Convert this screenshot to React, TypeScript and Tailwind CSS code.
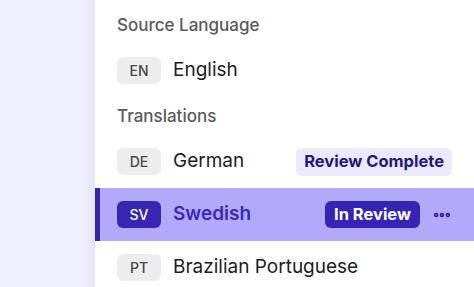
import { MoreHorizontal } from 'lucide-react';

type Lang = {
  code: string;
  name: string;
  status?: 'complete' | 'review';
  active?: boolean;
};

const translations: Lang[] = [
  { code: 'DE', name: 'German', status: 'complete' },
  { code: 'SV', name: 'Swedish', status: 'review', active: true },
  { code: 'PT', name: 'Brazilian Portuguese' },
];

function CodeBadge({ code, active }: { code: string; active?: boolean }) {
  return (
    <span
      className={
        active
          ? 'flex h-[27px] w-[44px] items-center justify-center rounded-[6px] bg-[#3726b4] text-[14px] font-medium text-white'
          : 'flex h-[27px] w-[44px] items-center justify-center rounded-[6px] bg-[#ededed] text-[14px] font-medium text-[#474747]'
      }
    >
      {code}
    </span>
  );
}

function Row({ lang }: { lang: Lang }) {
  return (
    <div
      className={
        lang.active
          ? 'flex h-[53px] items-center border-l-[5px] border-[#3624b0] bg-[#b2aaf8] pl-[17px] pr-[22px]'
          : 'flex h-[53px] items-center pl-[22px] pr-[22px]'
      }
    >
      <CodeBadge code={lang.code} active={lang.active} />
      <span
        className={
          lang.active
            ? 'ml-[12px] text-[19px] font-semibold text-[#3a28b8]'
            : 'ml-[12px] text-[19px] text-[#1c1c1c]'
        }
      >
        {lang.name}
      </span>
      <div className="ml-auto flex items-center">
        {lang.status === 'complete' && (
          <span className="flex h-[28px] items-center rounded-[6px] bg-[#ebe9fc] px-[8px] text-[16.5px] font-bold text-[#1f1a7c]">
            Review Complete
          </span>
        )}
        {lang.status === 'review' && (
          <>
            <span className="flex h-[27px] items-center rounded-[6px] bg-[#3624b4] px-[9px] text-[16.5px] font-bold text-white">
              In Review
            </span>
            <MoreHorizontal className="ml-[12px] h-[20px] w-[20px] text-[#2d1fa3]" strokeWidth={3.5} />
          </>
        )}
      </div>
    </div>
  );
}

export default function App() {
  return (
    <div
      className="flex h-[287px] w-[474px] overflow-hidden bg-white"
      style={{ fontFamily: 'Inter, "Noto Sans", sans-serif' }}
    >
      {/* sidebar */}
      <div className="h-full w-[95px] bg-gradient-to-r from-[#f0effd] from-85% to-[#e7e6f6]" />

      {/* language list */}
      <div className="flex-1 pt-[14px]">
        <h3 className="pl-[22px] text-[17px] leading-[22px] font-medium text-[#5a5a5a]">Source Language</h3>
        <div className="mt-[10px] flex h-[48px] items-center pl-[22px]">
          <CodeBadge code="EN" />
          <span className="ml-[12px] text-[19px] text-[#1c1c1c]">English</span>
        </div>
        <h3 className="mt-[11px] pl-[22px] text-[17px] leading-[22px] font-medium text-[#5a5a5a]">Translations</h3>
        <div className="mt-[8px]">
          {translations.map((t) => (
            <Row key={t.code} lang={t} />
          ))}
        </div>
      </div>
    </div>
  );
}
